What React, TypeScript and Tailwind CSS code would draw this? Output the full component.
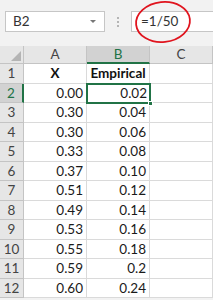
import React from "react";

const rows: [string, string, string][] = [
  ["1", "X", "Empirical"],
  ["2", "0.00", "0.02"],
  ["3", "0.30", "0.04"],
  ["4", "0.30", "0.06"],
  ["5", "0.33", "0.08"],
  ["6", "0.37", "0.10"],
  ["7", "0.51", "0.12"],
  ["8", "0.49", "0.14"],
  ["9", "0.53", "0.16"],
  ["10", "0.55", "0.18"],
  ["11", "0.59", "0.2"],
  ["12", "0.60", "0.24"],
];

const heights = ["h-[20px]", "h-[19px]", "h-[20px]", "h-[19px]", "h-[20px]", "h-[19px]", "h-[20px]", "h-[19px]", "h-[20px]", "h-[19px]", "h-[20px]", "h-[19px]"];

export default function App() {
  return (
    <div className="w-[213px] h-[300px] overflow-hidden bg-[#f2f2f2] font-['Lato',sans-serif] text-[13.5px] text-[#1a1a1a]">
      <div className="relative h-[46px] flex items-start pt-[11px] pl-[5px]">
        <div className="w-[100px] h-[21px] border border-[#c6c6c6] bg-white flex items-center justify-between pl-[7px] pr-[8px]">
          <span className="text-[13.5px] text-[#333]">B2</span>
          <span className="w-0 h-0 border-l-[3px] border-r-[3px] border-t-[3px] border-l-transparent border-r-transparent border-t-[#777]" />
        </div>
        <div className="w-[26px] h-[21px] flex flex-col items-center justify-center gap-[2px]">
          <span className="w-[2px] h-[2px] bg-[#b5b5b5]" />
          <span className="w-[2px] h-[2px] bg-[#b5b5b5]" />
          <span className="w-[2px] h-[2px] bg-[#b5b5b5]" />
        </div>
        <div className="flex-1 h-[21px] border border-r-0 border-[#c6c6c6] bg-white flex items-center pl-[9px]">
          <span className="text-[13.5px] text-[#333]">=1/50</span>
        </div>
        <svg className="absolute left-[132px] top-0" width="64" height="46" viewBox="0 0 64 46">
          <ellipse cx="31" cy="22" rx="27" ry="20" transform="rotate(-6 31 22)" fill="none" stroke="#e0141e" strokeWidth="1.8" />
        </svg>
      </div>
      <div className="grid grid-cols-[24px_63px_63px_63px]">
        <div className="h-[18px] bg-[#e6e6e6] border-r border-b border-[#c4c4c4] flex items-end justify-end pr-[2px] pb-[2px]">
          <svg width="10" height="10" viewBox="0 0 10 10">
            <polygon points="10,0 10,10 0,10" fill="#b4b4b4" />
          </svg>
        </div>
        <div className="h-[18px] bg-[#e6e6e6] border-r border-b border-[#c4c4c4] flex items-center justify-center text-[#444]">A</div>
        <div className="h-[18px] bg-[#d2d2d2] border-r border-[#c4c4c4] border-b-2 border-b-[#217346] flex items-center justify-center text-[#217346]">B</div>
        <div className="h-[18px] bg-[#e6e6e6] border-r border-b border-[#c4c4c4] flex items-center justify-center text-[#444]">C</div>
        {rows.map(([n, a, b], i) => {
          const sel = n === "2";
          const h = heights[i];
          return (
            <React.Fragment key={n}>
              <div
                className={`${h} border-b border-[#c4c4c4] flex items-center justify-center ${
                  sel ? "bg-[#d2d2d2] text-[#217346] border-r-2 border-r-[#217346]" : "bg-[#e6e6e6] text-[#444] border-r"
                }`}
              >
                {n}
              </div>
              <div className={`${h} bg-white border-r border-b border-[#dadada] flex items-center ${n === "1" ? "justify-center font-bold text-[#111]" : "justify-end pr-[3px]"}`}>
                {a}
              </div>
              {sel ? (
                <div className={`${h} relative bg-white flex items-center justify-end pr-[3px]`}>
                  <div className="absolute -left-[1px] -top-[1px] -right-[1px] -bottom-[1px] border-2 border-[#217346]" />
                  <div className="absolute -right-[3px] -bottom-[3px] w-[5px] h-[5px] bg-[#217346] border border-white" />
                  <span className="relative">{b}</span>
                </div>
              ) : (
                <div className={`${h} bg-white border-r border-b border-[#dadada] flex items-center ${n === "1" ? "justify-center font-bold text-[#111]" : "justify-end pr-[3px]"}`}>
                  {b}
                </div>
              )}
              <div className={`${h} bg-white border-r border-b border-[#dadada]`} />
            </React.Fragment>
          );
        })}
      </div>
    </div>
  );
}
